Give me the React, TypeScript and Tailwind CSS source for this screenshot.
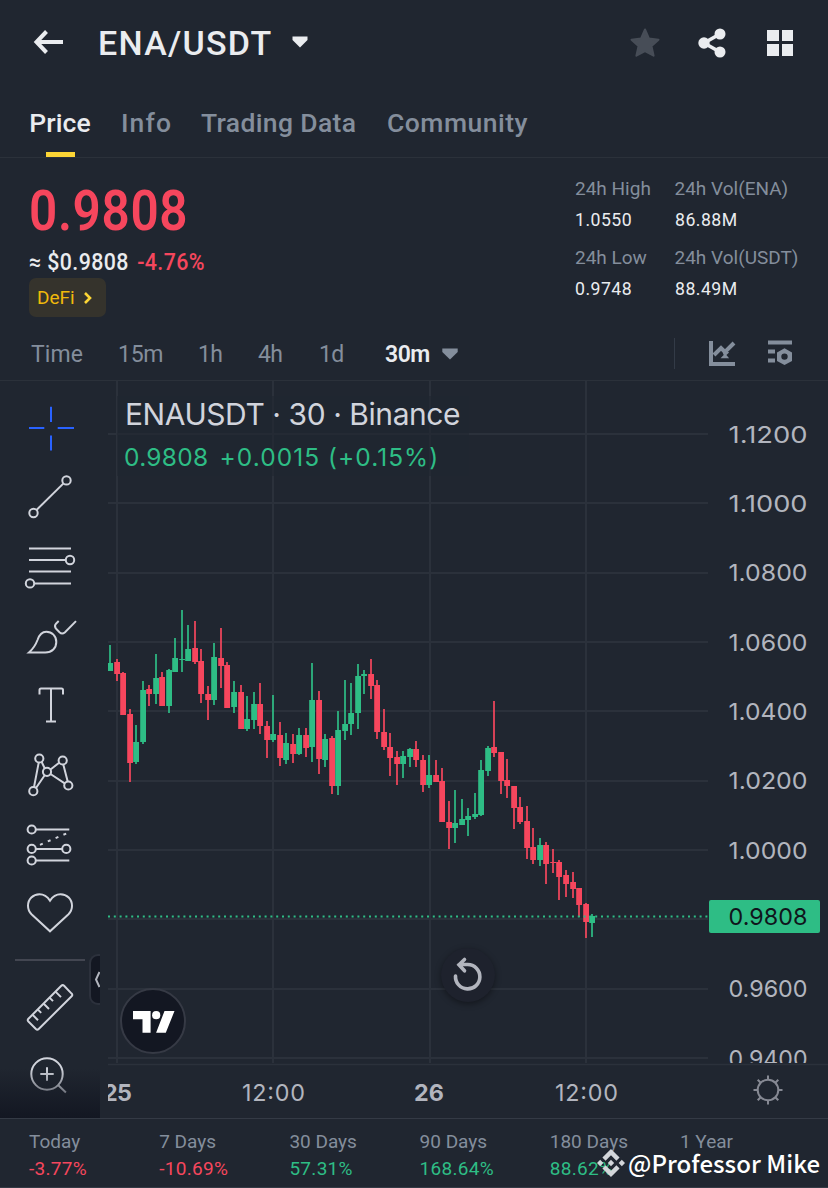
import React from "react";
import { SiBinance } from "react-icons/si";

type Candle = [color: "g" | "r", high: number, top: number, bottom: number, low: number];

const candles: Candle[] = [
  ["g", 264, 282, 290, 290], ["r", 278, 281, 293, 300], ["r", 291, 292, 334, 334],
  ["r", 328, 333, 382, 401], ["g", 344, 361, 381, 383], ["g", 300, 309, 361, 363],
  ["r", 304, 308, 313, 325], ["g", 273, 297, 313, 323], ["r", 291, 296, 325, 325],
  ["g", 288, 289, 325, 332], ["g", 257, 277, 291, 291], ["g", 229, 278, 279, 291],
  ["g", 244, 268, 280, 280], ["r", 240, 267, 281, 283], ["r", 268, 280, 313, 322],
  ["r", 305, 313, 319, 339], ["g", 262, 276, 319, 324], ["r", 247, 277, 285, 307],
  ["r", 281, 284, 327, 327], ["g", 300, 311, 326, 332], ["r", 304, 311, 348, 348],
  ["g", 315, 338, 348, 350], ["g", 311, 323, 339, 348], ["r", 302, 323, 345, 353],
  ["r", 340, 345, 359, 377], ["g", 314, 353, 359, 361], ["r", 341, 354, 377, 385],
  ["g", 352, 362, 379, 383], ["r", 353, 363, 373, 382], ["g", 347, 354, 373, 374],
  ["r", 347, 354, 367, 376], ["g", 282, 319, 366, 381], ["r", 310, 319, 378, 393],
  ["g", 353, 358, 379, 386], ["r", 355, 357, 405, 413], ["g", 330, 349, 405, 414],
  ["g", 299, 343, 350, 359], ["g", 302, 332, 343, 354], ["g", 283, 295, 332, 348],
  ["g", 289, 293, 295, 313], ["r", 278, 293, 305, 318], ["r", 299, 304, 351, 358],
  ["r", 328, 351, 366, 369], ["r", 352, 366, 377, 395], ["r", 370, 376, 383, 404],
  ["g", 370, 375, 383, 397], ["g", 367, 368, 376, 386], ["r", 360, 368, 379, 386],
  ["r", 374, 379, 404, 411], ["g", 374, 394, 404, 407], ["r", 379, 394, 401, 401],
  ["r", 387, 400, 441, 441], ["r", 420, 441, 447, 468], ["g", 409, 442, 447, 462],
  ["g", 418, 438, 444, 444], ["g", 427, 435, 439, 455], ["g", 412, 433, 436, 438],
  ["g", 379, 389, 434, 435], ["g", 365, 367, 390, 395], ["r", 320, 366, 372, 376],
  ["r", 371, 371, 400, 413], ["r", 378, 399, 405, 417], ["r", 405, 405, 427, 448],
  ["r", 416, 426, 441, 443], ["r", 425, 440, 467, 478], ["r", 447, 466, 479, 483],
  ["g", 457, 464, 479, 485], ["r", 461, 464, 483, 503], ["r", 468, 481, 482, 492],
  ["r", 479, 481, 496, 519], ["r", 489, 494, 503, 516], ["r", 491, 501, 508, 517],
  ["r", 507, 507, 524, 536], ["r", 522, 523, 541, 557], ["g", 533, 535, 542, 556],
];

const prices = ["1.1200", "1.1000", "1.0800", "1.0600", "1.0400", "1.0200", "1.0000", "", "0.9600", "0.9400"];
const gridX = [9, 165, 322, 478];

const tabs = [
  { label: "Info", className: "ml-[30px] w-[51px] tracking-[1.1px]" },
  { label: "Trading Data", className: "ml-[29px] w-[156px] tracking-[0.35px]" },
  { label: "Community", className: "ml-[30px] w-[141px] tracking-[0.5px]" },
];

const intervals = [
  { label: "Time", className: "w-[87px] tracking-[0.1px]" },
  { label: "15m", className: "w-[80px] tracking-[-0.3px]" },
  { label: "1h", className: "w-[60px] tracking-[-0.6px]" },
  { label: "4h", className: "w-[61px] tracking-[-0.6px]" },
  { label: "1d", className: "w-[66px] tracking-[-0.6px]" },
];

const stats = [
  { label: "24h High", value: "1.0550" },
  { label: "24h Vol(ENA)", value: "86.88M" },
  { label: "24h Low", value: "0.9748" },
  { label: "24h Vol(USDT)", value: "88.49M" },
];

const periods = [
  { label: "Today", value: "-3.77%", color: "text-[#f6465d]" },
  { label: "7 Days", value: "-10.69%", color: "text-[#f6465d]" },
  { label: "30 Days", value: "57.31%", color: "text-[#2ebd85]" },
  { label: "90 Days", value: "168.64%", color: "text-[#2ebd85]" },
  { label: "180 Days", value: "88.62%", color: "text-[#2ebd85]" },
  { label: "1 Year", value: "--", color: "text-[#848e9c]" },
];

const Header = () => (
  <header className="flex h-[86px] shrink-0 items-center pl-[33px] pr-[35px]">
    <svg width="30" height="24" viewBox="0 0 30 24" fill="none" stroke="#eaecef" strokeWidth="4" className="-mt-0.5">
      <path d="M30 12H4M13.5 1.5L3.5 12l10 10.5" />
    </svg>
    <h1 className="ml-[35px] w-[174px] whitespace-nowrap text-[34px] font-medium leading-[40px] tracking-[1.25px] text-[#eaecef]">
      ENA/USDT
    </h1>
    <svg width="16" height="12" viewBox="0 0 16 12" fill="#eaecef" className="ml-5 -mt-0.5">
      <path d="M.5.5h15V4L8 11.5.5 4z" />
    </svg>
    <div className="ml-auto flex items-center gap-[37px]">
      <svg width="30" height="30" viewBox="0 0 30 30" fill="#474d57" stroke="#474d57" strokeWidth="2" strokeLinejoin="round">
        <path d="M15 1.5l4 9.1 9.5 1.1-7 6.4 2.1 9.6-8.6-4.6-8.6 4.6 2.1-9.6-7-6.4 9.500-1.100z" />
      </svg>
      <svg width="30" height="30" viewBox="0 0 30 30" fill="#eaecef" stroke="#eaecef" className="-mt-px mr-[3px]">
        <path d="M23 6L7 15l16 9" fill="none" strokeWidth="3.6" />
        <circle cx="23" cy="6" r="5.5" stroke="none" />
        <circle cx="7" cy="15" r="5.7" stroke="none" />
        <circle cx="23" cy="24" r="5.5" stroke="none" />
      </svg>
      <div className="-mt-px grid grid-cols-2 gap-[3px]">
        <div className="size-[11.5px] bg-[#eaecef]" />
        <div className="size-[11.5px] bg-[#eaecef]" />
        <div className="size-[11.5px] bg-[#eaecef]" />
        <div className="size-[11.5px] bg-[#eaecef]" />
      </div>
    </div>
  </header>
);

const Tabs = () => (
  <nav className="flex h-[72px] shrink-0 border-b border-[#2b313a] pl-[29px] text-[26.5px] font-medium leading-[73px] text-[#848e9c]">
    <div className="flex w-[62px] flex-col items-center text-[#eaecef]">
      <span className="h-[66px] tracking-[0.1px]">Price</span>
      <div className="h-[5px] w-[29px] bg-[#fcd535]" />
    </div>
    {tabs.map((tab) => (
      <span key={tab.label} className={`whitespace-nowrap ${tab.className}`}>
        {tab.label}
      </span>
    ))}
  </nav>
);

const Ticker = () => (
  <section className="flex h-[170px] shrink-0 justify-between pl-[29px]">
    <div className="flex flex-col items-start pt-[23px]">
      <div className="origin-left scale-x-90 text-[55px] font-semibold leading-[60px] tracking-[0.7px] text-[#f6465d]">0.9808</div>
      <div className="mt-[9px] flex h-[26px] origin-left scale-x-93 items-center gap-[9px] whitespace-nowrap text-[23px] font-medium leading-[26px] tracking-[0.4px]">
        <span className="text-[#eaecef]">≈ $0.9808</span>
        <span className="text-[#f6465d]">-4.76%</span>
      </div>
      <div className="mt-[2px] flex h-[39px] w-[77px] items-center gap-[9px] rounded-[7px] bg-[#35332c] pl-2 text-[19px] leading-[40px] text-[#f0b90b]">
        DeFi
        <svg width="8" height="12" viewBox="0 0 8 12" fill="none" stroke="#fcd535" strokeWidth="2.6">
          <path d="M1 1l5 5-5 5" />
        </svg>
      </div>
    </div>
    <div className="grid h-[138px] w-[253px] grid-cols-[99.5px_1fr] pt-[17px] whitespace-nowrap text-[19px]">
      {stats.map((s) => (
        <div key={s.label} className="h-[69px]">
          <div className="leading-[28px] text-[#848e9c]">{s.label}</div>
          <div className="mt-[3px] origin-left scale-x-93 leading-[28px] tracking-[0.5px] text-[#eaecef]">{s.value}</div>
        </div>
      ))}
    </div>
  </section>
);

const Intervals = () => (
  <div className="flex h-[53px] shrink-0 items-center border-b border-[#2b313a] pl-[31px] text-[23px] text-[#848e9c]">
    {intervals.map((item) => (
      <span key={item.label} className={`pt-[2px] ${item.className}`}>
        {item.label}
      </span>
    ))}
    <span className="w-[57px] pt-[2px] font-semibold tracking-[-0.5px] text-[#eaecef]">30m</span>
    <svg width="16" height="12" viewBox="0 0 16 12" fill="#848e9c" className="-mt-px">
      <path d="M.3.5h15.4V4L8 11.5.3 4z" />
    </svg>
    <div className="ml-auto mr-[33px] mt-[-2px] h-[31px] w-px bg-[#333b47]" />
    <svg width="28" height="28" viewBox="0 0 28 28" fill="none" stroke="#848e9c" strokeWidth="4" className="-mt-px">
      <path d="M3 1v23h24" />
      <path d="M6 15l7-7 4 4 9-9" strokeWidth="4" />
      <path d="M12.5 18.2h8.6l-2.7-3.2 2.7-2.5-3.2-2-3.2 2 1 2.5z" fill="#848e9c" stroke="none" />
    </svg>
    <svg width="24" height="25" viewBox="0 0 24 25" fill="#848e9c" className="-mt-[3px] ml-[32px] mr-[36px]">
      <path d="M0 .5h24v4H0zM0 9.5h7v4H0zM0 18.5h7v4H0z" />
      <path fillRule="evenodd" d="M16.5 8.3l7.5 4.2v8.4l-7.5 4.1L9 20.9v-8.4zM16.5 13.4a3.2 3.2 0 100 6.4 3.2 3.2 0 000-6.4z" />
    </svg>
  </div>
);

const Tool = ({ children, color = "#d1d4dc" }: { children: React.ReactNode; color?: string }) => (
  <div className="flex h-[69.3px] w-full items-center justify-center">
    <svg width="60" height="60" viewBox="0 0 60 60" fill="none" stroke={color} strokeWidth="2">
      {children}
    </svg>
  </div>
);

const Toolbar = () => (
  <aside className="relative h-[737px] w-[100px] shrink-0 overflow-hidden pt-[12.5px]">
    <Tool color="#2962ff">
      <path d="M31 8.7V24M31 37.5v15M9 30h15.3M37.7 30H54" />
    </Tool>
    <Tool>
      <circle cx="46.5" cy="13.4" r="4.2" />
      <circle cx="13.5" cy="46" r="4.2" />
      <path d="M43.5 16.4L16.5 43" />
    </Tool>
    <Tool>
      <path d="M9 11.4h42M9 23h37M9 34.6h42M14 46.4h37" />
      <circle cx="50" cy="23" r="4.2" />
      <circle cx="10" cy="46.4" r="4.2" />
    </Tool>
    <Tool>
      <path d="M9 46.4C13 43 16 38 17.5 34c1.7-5 4-8.2 8.8-8.2 5.7 0 10 4.2 10 10.2s-4.3 10.400-11 10.400z" />
      <path d="M38.7 15.1L36.2 17.4Q34 19.6 35.8 22.5L39.5 26.3Q42 28.6 44.8 26.5L56 15.1" />
    </Tool>
    <Tool>
      <path d="M19.5 19.5V15q0-1.500 1.500-1.500h20.500q1.500 0 1.500 1.500v4.500M31 13.500v33M26 46.500h10" />
    </Tool>
    <Tool>
      <circle cx="19.3" cy="13.5" r="4.1" />
      <circle cx="42.7" cy="15.5" r="4.1" />
      <circle cx="27" cy="26.8" r="4.1" />
      <circle cx="48.3" cy="40.5" r="4.1" />
      <circle cx="13.3" cy="46.2" r="4.1" />
      <path d="M18.7 17.6L14 42.1M21.7 17l3 6.2M39.2 17.7L30.5 24.5M43.3 19.6l4.400 16.800M30.500 29l14.200 9.300M24.700 30.300L16 43" />
    </Tool>
    <Tool>
      <circle cx="11.7" cy="15.5" r="4.1" />
      <circle cx="11.7" cy="34.9" r="4.1" />
      <circle cx="46.3" cy="34.9" r="4.1" />
      <circle cx="11.7" cy="46.5" r="4.1" />
      <path d="M16 15.5h33.3M16 34.9h26M16 46.5h33.3" />
      <path d="M20 30.8L47 19.2" strokeDasharray="3 5.5" />
    </Tool>
    <Tool>
      <path d="M30 17.6C27 13 23.500 11.200 19.500 11.200 13 11.200 8 16 8 22.800c0 4 1.500 6.500 3.500 8.500L30 48.300l18.500-17c2-2 3.500-4.500 3.500-8.500 0-6.800-5-11.600-11.500-11.600-4 0-7.500 1.800-10.500 6.400z" />
    </Tool>
    <div className="ml-[15px] mt-[11.5px] h-[2px] w-[70px] bg-[#434651]" />
    <div className="mt-[10.5px]">
      <Tool>
        <path d="M41.3 8.8q1.400-1.300 2.800 0l7.500 7.800q1.400 1.300 0 2.700L18.700 52q-1.400 1.300-2.800 0l-7.500-7.500q-1.400-1.300 0-2.700z" />
        <path d="M35.500 14.600l5.500 5.500M29.500 20.600l3.500 3.500M23.500 26.500l5.500 5.500M17.700 32.400l3.500 3.500M12.500 37.700l5.500 5.500" />
      </Tool>
    </div>
    <Tool>
      <circle cx="27" cy="28" r="15.7" />
      <path d="M27 21.300v13.400M20.300 28h13.400M38.300 39.300l7.600 7.200" />
    </Tool>
    <div className="absolute right-0 top-[573px] h-[51px] w-[11px] rounded-l-[9px] border-2 border-r-0 border-[#2c313c] bg-[#131722]">
      <svg width="9" height="47" viewBox="0 0 9 47" fill="none" stroke="#b2b5be" strokeWidth="2">
        <path d="M8.500 16L5 23.500 8.500 31" />
      </svg>
    </div>
    <div className="absolute inset-x-0 bottom-0 h-[50px] bg-gradient-to-b from-transparent to-[#131722]" />
  </aside>
);

const Chart = () => (
  <div className="relative ml-2 h-[737px] w-[720px] font-[Inter]">
    <svg width="720" height="737" viewBox="0 0 720 737" fontSize="23.3" fill="#b2b5be">
      <g stroke="#2b313b" strokeWidth="2">
        {gridX.map((x) => (
          <path key={x} d={`M${x} 0V682`} />
        ))}
        {prices.map((_, i) => (
          <path key={i} d={`M0 ${Math.round(53 + i * 69.35)}H600`} />
        ))}
        <path d="M0 683.5H720" strokeWidth="1.5" />
      </g>
      {candles.map(([color, high, top, bottom, low], i) => {
        const x = Math.round(2.3 + i * 6.51);
        return (
          <g key={i} fill={color === "g" ? "#2ebd85" : "#f6465d"}>
            <rect x={x - 1} y={high} width="2" height={low - high} opacity="0.85" />
            <rect x={x - 2.8} y={top} width="5.8" height={bottom - top} />
          </g>
        );
      })}
      <path d="M0 535.5H600" stroke="#2ebd85" strokeWidth="1.8" strokeDasharray="2 3.800" />
      <svg width="720" height="682">
        {prices.map((p, i) => (
          <text key={i} x="620.5" y={61.5 + i * 69.35} textLength="79" lengthAdjust="spacingAndGlyphs">
            {p}
          </text>
        ))}
      </svg>
      <rect x="601" y="519" width="111" height="33" rx="2" fill="#2ebd85" />
      <text x="620.5" y="544" textLength="79" fill="#10151c">0.9808</text>
      <text x="-5" y="719.5" textLength="29" fontWeight="700">25</text>
      <text x="134" y="719.5" textLength="63">12:00</text>
      <text x="306" y="719.5" textLength="30" fontWeight="700">26</text>
      <text x="447" y="719.5" textLength="63">12:00</text>
      <g fill="none" stroke="#868993" strokeWidth="2">
        <circle cx="660" cy="709" r="10.3" />
        <path d="M660 694.5v4.5M660 719v4.5M645.5 709h4.5M670 709h4.5M649.7 698.7l3 3M667.3 716.3l3 3M649.7 719.3l3-3M667.3 701.7l3-3" />
      </g>
    </svg>

    <div className="absolute left-[9px] top-[15px] whitespace-nowrap bg-[#202630]/60 pl-[7px]">
      <div className="h-[36px] w-[345px] pl-px text-[30px] leading-[36px] tracking-[-0.44px] text-[#d1d4dc]">ENAUSDT · 30 · Binance</div>
      <div className="mt-[6px] flex h-[38px] gap-[11px] text-[24.5px] leading-[38px] text-[#2ebd85]">
        <span className="tracking-[0.3px]">0.9808</span>
        <span className="tracking-[1.05px]">+0.0015 (+0.15%)</span>
      </div>
    </div>

    <div className="absolute left-[12px] top-[607px] flex size-[66px] items-center justify-center rounded-full border-2 border-[#363a45] bg-[#131722]">
      <svg width="42" height="22" viewBox="0 0 42 22" fill="#fff" className="ml-px mt-px">
        <path d="M0 0h17.600v21.800H9.500V8.200H0zM31.500 0h10l-8.700 21.800h-9.700z" />
        <circle cx="23.2" cy="4.2" r="4.1" />
      </svg>
    </div>

    <div className="absolute left-[333px] top-[567px] flex size-[54px] items-center justify-center rounded-full bg-[#1e222d] shadow-[0_2px_6px_rgba(0,0,0,0.4)]">
      <svg width="54" height="54" viewBox="0 0 54 54" fill="none" stroke="#b2b5be" strokeWidth="3.6" strokeLinecap="round">
        <path d="M14.500 28a12.200 12.200 0 1012.200-11.500H18M23.500 11.500L18 16.800l5.500 6" />
      </svg>
    </div>
  </div>
);

const Footer = () => (
  <footer className="relative flex h-[70px] shrink-0 border-y border-[#343a45] pl-[29px] pt-[9px] text-[19px]">
    {periods.map((p) => (
      <div key={p.label} className="w-[130.2px] shrink-0 whitespace-nowrap">
        <div className="leading-[28px] text-[#848e9c]">{p.label}</div>
        <div className={`leading-[26px] tracking-[0.3px] ${p.color}`}>{p.value}</div>
      </div>
    ))}
    <div className="absolute left-[597px] top-[27px] flex items-center gap-[3px] whitespace-nowrap text-white">
      <SiBinance size={28} color="#d3d6da" />
      <span className="font-['Noto_Sans_CJK_SC','Noto_Sans',sans-serif] text-[24px] font-medium leading-[34px] tracking-[0.05px]">@Professor Mike</span>
    </div>
  </footer>
);

const App: React.FC = () => {
  return (
    <div className="flex h-[1188px] w-[828px] flex-col overflow-hidden bg-[#202630] font-[Roboto]">
      <Header />
      <Tabs />
      <Ticker />
      <Intervals />
      <main className="flex h-[737px] shrink-0">
        <Toolbar />
        <Chart />
      </main>
      <Footer />
    </div>
  );
};

export default App;
